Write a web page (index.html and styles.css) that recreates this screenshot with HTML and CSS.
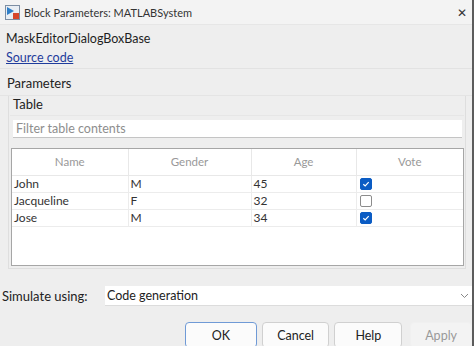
FILE: index.html
```html
<html>
	<head>
		<meta charset="utf-8">
		<title>Block Parameters: MATLABSystem</title>
		<link rel="stylesheet" href="styles.css">
	</head>
	<body>
		<div class="window">
			<div class="titlebar">
				<svg class="app-icon" width="15" height="15" viewBox="0 0 15 15">
					<rect x="0.5" y="0.5" width="14" height="14" fill="#e9eef4" stroke="#7d8ea3"/>
					<polygon points="2,2 2,10 9,6" fill="#2f7fc8"/>
					<rect x="8" y="8" width="6" height="6" fill="#d7462a"/>
				</svg>
				<span class="title-text">Block Parameters: MATLABSystem</span>
				<span class="close">&#x2715;</span>
			</div>
			<div class="desc">
				<div class="desc-title">MaskEditorDialogBoxBase</div>
				<a class="desc-link" href="#">Source code</a>
			</div>
			<div class="params">
				<div class="params-title">Parameters</div>
				<div class="group">
					<div class="group-title">Table</div>
					<div class="filter">Filter table contents</div>
					<div class="table-box">
						<table class="grid">
							<colgroup>
								<col style="width: 116px">
								<col style="width: 123px">
								<col style="width: 105px">
								<col>
							</colgroup>
							<thead>
								<tr><th>Name</th><th>Gender</th><th>Age</th><th>Vote</th></tr>
							</thead>
							<tbody>
								<tr>
									<td>John</td><td>M</td><td>45</td>
									<td><span class="check on"><svg width="12" height="12" viewBox="0 0 12 12"><polyline points="3.3,6.2 5.2,8 8.7,4.2" fill="none" stroke="#fff" stroke-width="1.2"/></svg></span></td>
								</tr>
								<tr>
									<td>Jacqueline</td><td>F</td><td>32</td>
									<td><span class="check"></span></td>
								</tr>
								<tr>
									<td>Jose</td><td>M</td><td>34</td>
									<td><span class="check on"><svg width="12" height="12" viewBox="0 0 12 12"><polyline points="3.3,6.2 5.2,8 8.7,4.2" fill="none" stroke="#fff" stroke-width="1.2"/></svg></span></td>
								</tr>
							</tbody>
						</table>
					</div>
				</div>
			</div>
			<div class="simulate">
				<span class="simulate-label">Simulate using:</span>
				<div class="select">
					<span>Code generation</span>
					<svg width="9" height="6" viewBox="0 0 9 6"><polyline points="1,1 4.5,4.5 8,1" fill="none" stroke="#888" stroke-width="1"/></svg>
				</div>
			</div>
			<div class="buttons">
				<button class="btn default">OK</button>
				<button class="btn">Cancel</button>
				<button class="btn">Help</button>
				<button class="btn disabled">Apply</button>
			</div>
		</div>
	</body>
</html>
```

FILE: styles.css
```css
body {
	margin: 0;
	background: #efefef;
	font-family: Lato, "Open Sans", sans-serif;
	color: #222;
	overflow: hidden;
}

.window {
	width: 472px;
	height: 346px;
	border-right: 2px solid #5c5c5c;
	background: #eeeeee;
}

.titlebar {
	height: 24px;
	display: flex;
	align-items: center;
	gap: 4px;
	padding-left: 5px;
	padding-right: 4px;
	background: #f3f3f3;
	border-bottom: 1px solid #e6e6e6;
}

.title-text {
	font-size: 11px;
	color: #333;
	flex: 1;
}

.close {
	font-size: 12px;
	color: #333;
	margin-right: 1px;
}

.desc {
	display: flex;
	flex-direction: column;
	padding: 4px 6px 0;
	height: 39px;
	border-bottom: 1px solid #e2e2e2;
}

.desc-title {
	font-size: 12.5px;
	line-height: 19px;
	color: #1e1e1e;
}

.desc-link {
	font-size: 12.5px;
	line-height: 19px;
	color: #1f3c9c;
	text-decoration: underline;
	width: fit-content;
}

.params {
	padding: 6px 0 0;
}

.params-title {
	font-size: 13px;
	line-height: 16px;
	padding-left: 7px;
	padding-bottom: 4px;
	border-bottom: 1px solid #e4e4e4;
}

.group {
	margin: 0 6px 0 8px;
	height: 172px;
	border: 1px solid #dedede;
	border-top: none;
	padding: 0 1px;
}

.group-title {
	font-size: 13px;
	line-height: 16px;
	padding: 0 3px;
	height: 19px;
	border-bottom: 1px solid #e6e6e6;
}

.filter {
	margin: 4px 0 0 3px;
	width: 446px;
	height: 17px;
	padding-left: 3px;
	background: #fff;
	border-bottom: 1px solid #c4c4c4;
	font-size: 12.5px;
	line-height: 17px;
	color: #8e8e8e;
}

.table-box {
	margin: 10px 0 0 1px;
	width: 451px;
	height: 116px;
	background: #fff;
	border: 1px solid #a6a6a6;
}

.grid {
	width: 100%;
	table-layout: fixed;
	border-collapse: collapse;
	font-size: 12px;
}

.grid th {
	height: 26px;
	padding: 0;
	font-size: 11.5px;
	font-weight: normal;
	color: #999;
	text-align: center;
	border-right: 1px solid #e8e8e8;
	border-bottom: 1px solid #e8e8e8;
}

.grid td {
	height: 17px;
	padding: 0 2px;
	color: #333;
	border-right: 1px solid #ececec;
	border-bottom: 1px solid #ececec;
}

.grid th:last-child,
.grid td:last-child {
	border-right: none;
}

.check {
	display: inline-block;
	width: 12px;
	height: 12px;
	box-sizing: border-box;
	border: 1px solid #8c8c8c;
	border-radius: 2px;
	background: #fff;
	vertical-align: middle;
	margin-left: 1px;
}

.check.on {
	border-color: #0b5cc4;
	background: #0b5cc4;
}

.check svg {
	display: block;
	margin: -1px;
}

.simulate {
	display: flex;
	align-items: center;
	margin-top: 17px;
	height: 20px;
}

.simulate-label {
	font-size: 13px;
	padding-left: 2px;
	width: 103px;
}

.select {
	flex: 1;
	height: 19px;
	display: flex;
	align-items: center;
	justify-content: space-between;
	padding: 0 3px 0 2px;
	background: #fff;
	border-bottom: 1px solid #dcdcdc;
	font-size: 12.5px;
}

.buttons {
	display: flex;
	gap: 5px;
	margin-top: 16px;
	padding-left: 185px;
}

.btn {
	height: 26px;
	width: 68px;
	background: #fbfbfb;
	border: 1px solid #d0d0d0;
	border-radius: 4px;
	font-family: Lato, "Open Sans", sans-serif;
	font-size: 12.5px;
	color: #222;
	padding: 0;
}

.btn.default {
	width: 72px;
	border-color: #6f9ad6;
}

.btn.disabled {
	width: 62px;
	margin-left: 3px;
	border-color: #f0f0f0;
	background: #f3f3f3;
	color: #999;
}
```
